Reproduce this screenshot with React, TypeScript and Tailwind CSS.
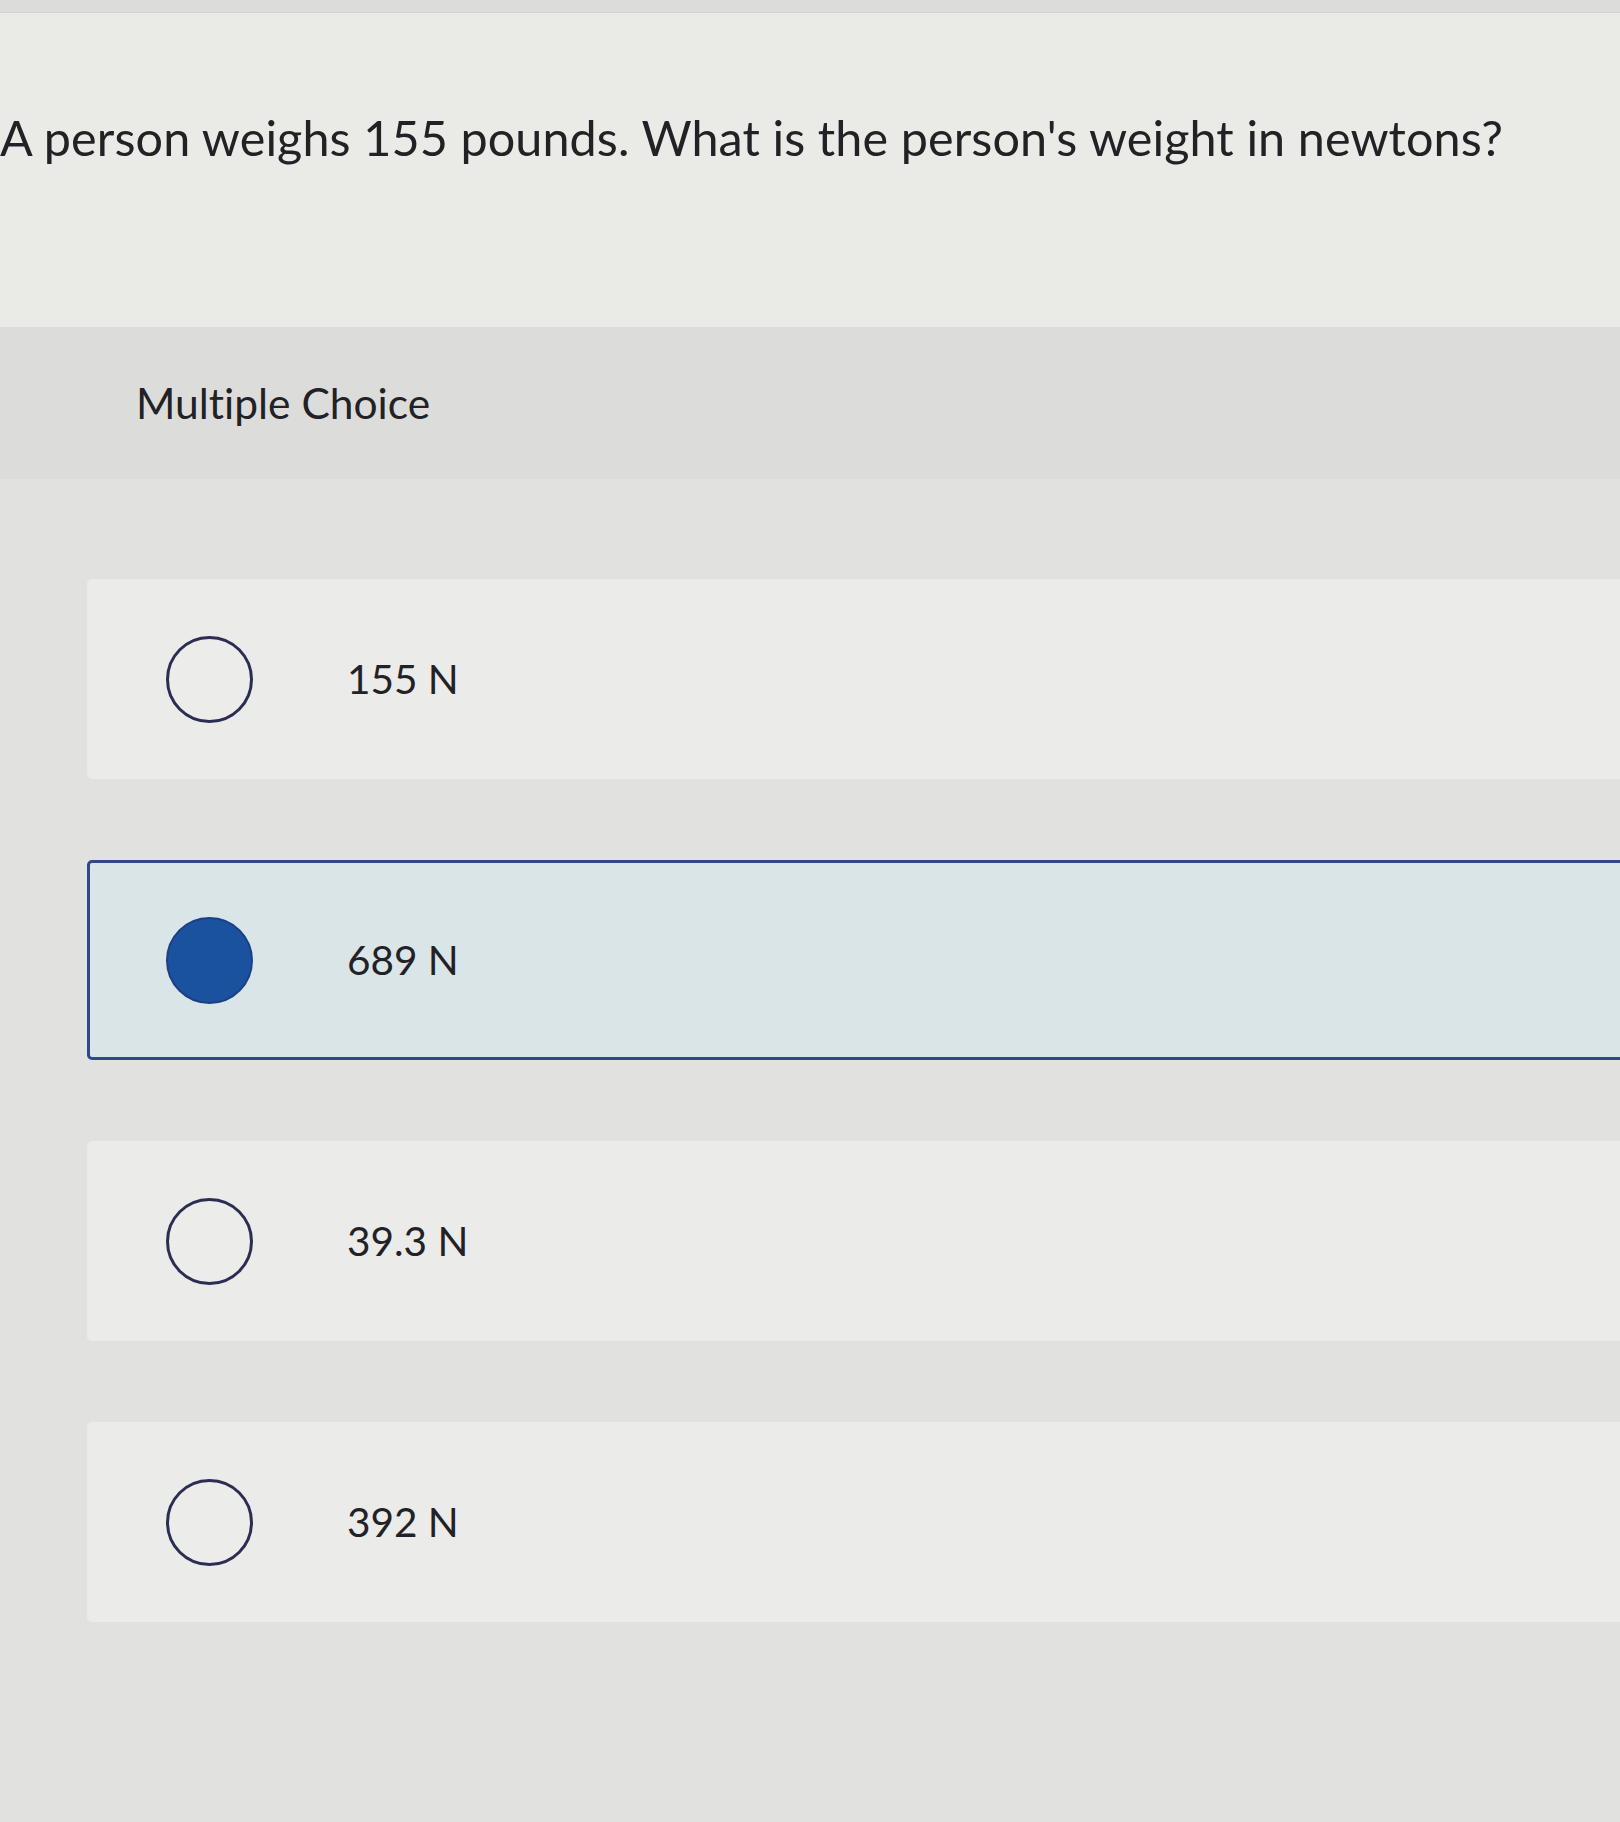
import React from "react";

const options = [
  { id: "a", label: "155 N" },
  { id: "b", label: "689 N" },
  { id: "c", label: "39.3 N" },
  { id: "d", label: "392 N" },
];

const Radio = ({ checked }: { checked: boolean }) => (
  <span
    className={
      checked
        ? "block h-[87px] w-[87px] shrink-0 rounded-full border-[2px] border-[#1d3f86] bg-[#1b52a0]"
        : "block h-[87px] w-[87px] shrink-0 rounded-full border-[3px] border-[#2b2e52] bg-[#ececea]"
    }
  />
);

export default function App() {
  const selected = "b";

  return (
    <div
      className="min-h-[1822px] w-[1620px] overflow-hidden bg-[#e1e2df] text-[#222226] [font-variant-ligatures:none]"
      style={{ fontFamily: "Lato, 'Open Sans', sans-serif" }}
    >
      {/* top strip */}
      <div className="h-[13px] border-b border-[#d2d2d0] bg-[#dcdcda]" />

      {/* question */}
      <div className="flex h-[314px] items-start bg-[#eaeae7] pt-[94px]">
        <p className="text-[48.5px] leading-[60px] tracking-[0.1px]">
          A person weighs 155 pounds. What is the person's weight in newtons?
        </p>
      </div>

      {/* header */}
      <div className="flex h-[152px] items-center bg-[#dcdddb] pl-[136px]">
        <h2 className="text-[42.5px] leading-none">Multiple Choice</h2>
      </div>

      {/* options */}
      <div className="flex flex-col gap-[81px] pb-[200px] pl-[87px] pt-[100px]">
        {options.map((o) => {
          const isSel = o.id === selected;
          return (
            <label
              key={o.id}
              className={
                isSel
                  ? "-mr-4 flex h-[200px] cursor-pointer items-center rounded-[5px] border-[3px] border-[#32478a] bg-[#dae5e8] pl-[76px]"
                  : "-mr-4 flex h-[200px] cursor-pointer items-center rounded-[5px] bg-[#ebebe9] pl-[79px]"
              }
            >
              <Radio checked={isSel} />
              <span className="ml-[94px] text-[40.5px] leading-none">{o.label}</span>
            </label>
          );
        })}
      </div>
    </div>
  );
}
